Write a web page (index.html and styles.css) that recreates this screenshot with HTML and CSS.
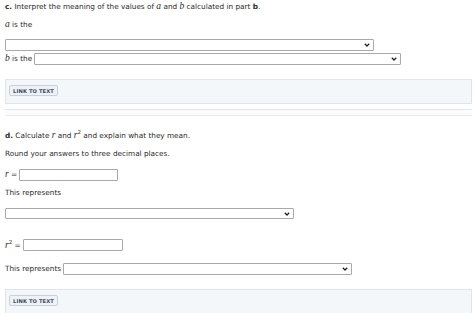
FILE: index.html
```html
<!DOCTYPE html>
<html lang="en">

<head>
    <meta charset="UTF-8" />
    <meta name="viewport" content="width=device-width, initial-scale=1.0" />
    <title>Question parts c and d</title>
    <link rel="stylesheet" href="styles.css">
</head>

<body>
    <main class="page">
        <section class="part part-c">
            <p class="prompt"><b>c.</b> Interpret the meaning of the values of <i class="m">a</i> and <i class="m">b</i> calculated in part <b>b</b>.</p>
            <p class="line line-a"><i class="m">a</i> is the</p>
            <div class="dropdown dd-a">
                <svg class="chev" viewBox="0 0 6 4" width="6" height="4"><path d="M0.8 0.8 L3 3 L5.2 0.8" /></svg>
            </div>
            <div class="row row-b">
                <span class="lbl"><i class="m">b</i> is the</span>
                <div class="dropdown dd-b">
                    <svg class="chev" viewBox="0 0 6 4" width="6" height="4"><path d="M0.8 0.8 L3 3 L5.2 0.8" /></svg>
                </div>
            </div>
            <div class="linkbox">
                <button class="linkbtn">LINK TO TEXT</button>
            </div>
        </section>

        <div class="divider"></div>

        <section class="part part-d">
            <p class="prompt"><b>d.</b> Calculate <i class="m">r</i> and <i class="m">r</i><sup>2</sup> and explain what they mean.</p>
            <p class="line line-round">Round your answers to three decimal places.</p>
            <div class="row row-r">
                <span class="lbl"><i class="m">r</i> =</span>
                <input class="answer" type="text" />
            </div>
            <p class="line line-rep">This represents</p>
            <div class="dropdown dd-c">
                <svg class="chev" viewBox="0 0 6 4" width="6" height="4"><path d="M0.8 0.8 L3 3 L5.2 0.8" /></svg>
            </div>
            <div class="row row-r2">
                <span class="lbl"><i class="m">r</i><sup>2</sup> =</span>
                <input class="answer" type="text" />
            </div>
            <div class="row row-rep">
                <span class="lbl">This represents</span>
                <div class="dropdown dd-d">
                    <svg class="chev" viewBox="0 0 6 4" width="6" height="4"><path d="M0.8 0.8 L3 3 L5.2 0.8" /></svg>
                </div>
            </div>
            <div class="linkbox linkbox-d">
                <button class="linkbtn">LINK TO TEXT</button>
            </div>
        </section>
    </main>
</body>

</html>
```

FILE: styles.css
```css
* {
    margin: 0;
    padding: 0;
    box-sizing: border-box;
}

html,
body {
    background: #ffffff;
    overflow: hidden;
}

body {
    font-family: 'DejaVu Sans', Verdana, sans-serif;
    font-size: 7.3px;
    line-height: 10px;
    color: #2b2b2b;
}

.page {
    width: 474px;
    padding: 2px 2px 0 5px;
}

b {
    font-weight: 700;
}

.m {
    font-family: 'Liberation Serif', 'Times New Roman', serif;
    font-style: italic;
    font-size: 9.5px;
    line-height: 1;
}

sup {
    font-size: 5.5px;
    line-height: 1;
    vertical-align: 4px;
}

.line-a {
    margin-top: 8px;
}

.dropdown {
    height: 12px;
    border: 1px solid #a9a9a9;
    border-radius: 1px;
    background: #ffffff;
    display: flex;
    align-items: center;
    justify-content: flex-end;
    padding-right: 3px;
}

.chev {
    fill: none;
    stroke: #222222;
    stroke-width: 1.3;
}

.dd-a {
    width: 369px;
    margin-top: 9px;
}

.row {
    display: flex;
    align-items: center;
    gap: 2px;
}

.row-b {
    margin-top: 2px;
}

.dd-b {
    width: 367px;
}

.linkbox {
    margin-top: 14px;
    height: 25px;
    border: 1px solid #dfe5eb;
    background: #f4f7fa;
    padding: 5px 3px 0;
}

.linkbtn {
    display: block;
    height: 11px;
    padding: 0 3px;
    font-family: 'DejaVu Sans', Verdana, sans-serif;
    font-size: 5.2px;
    font-weight: 700;
    letter-spacing: 0.1px;
    color: #3d4b5c;
    background: #eef2f6;
    border: 1px solid #c9d2dc;
    border-radius: 2px;
}

.divider {
    margin-top: 5px;
    height: 7px;
    border-top: 1px solid #e1e6ec;
    border-bottom: 1px solid #e6ebf0;
    background: #fbfcfd;
}

.part-d .prompt {
    margin-top: 14px;
}

.line-round {
    margin-top: 8px;
}

.row-r {
    margin-top: 10px;
}

.answer {
    height: 12px;
    border: 1px solid #a9a9a9;
    border-radius: 1px;
    background: #ffffff;
}

.row-r .answer {
    width: 99px;
}

.line-rep {
    margin-top: 7px;
}

.dd-c {
    width: 289px;
    height: 11px;
    margin-top: 10px;
}

.row-r2 {
    margin-top: 20px;
}

.row-r2 .answer {
    width: 100px;
}

.row-rep {
    margin-top: 12px;
}

.dd-d {
    width: 289px;
}

.linkbox-d {
    margin-top: 14px;
}
```
